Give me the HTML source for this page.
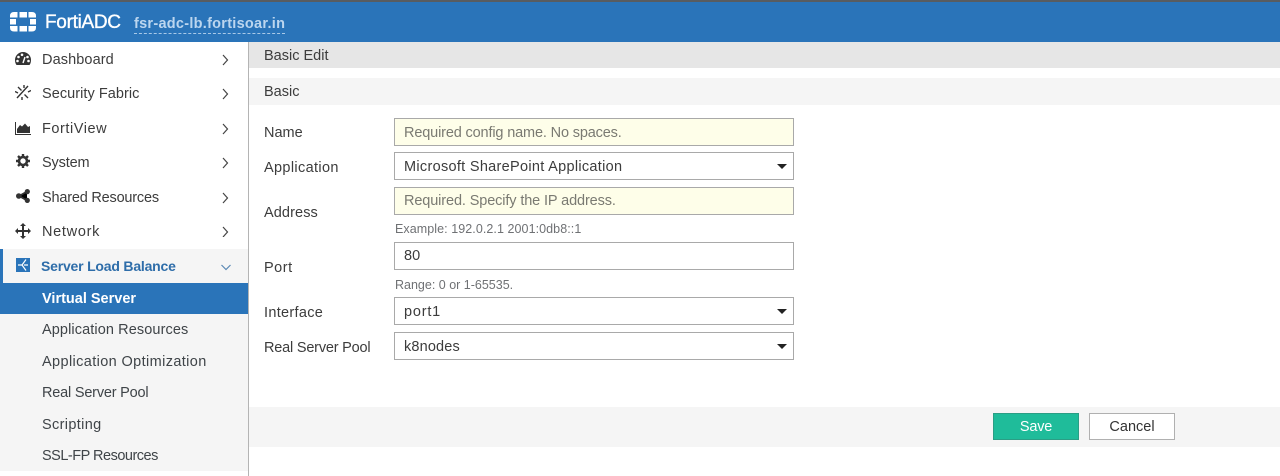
<!DOCTYPE html>
<html><head><meta charset="utf-8"><style>
html,body{margin:0;padding:0;background:#fff}
body{width:1280px;height:476px;position:relative;overflow:hidden;font-family:"Liberation Sans",sans-serif;font-size:14.5px;color:#333}
div{position:absolute;box-sizing:border-box;white-space:nowrap}
svg{position:absolute;display:block}
.n{left:42px;height:20px;line-height:20px;color:#3c3c3c}
.s{left:42px;height:20px;line-height:20px;color:#3f4448}
.l{left:264px;height:20px;line-height:20px;color:#3c3c3c}
.f{left:394px;width:400px;height:28px;border:1px solid #a9a9a9;background:#fff;line-height:28px;padding-left:9px;color:#3c3c3c}
.y{background:#fefee9;color:#7a7a72}
.h{left:395px;font-size:12.5px;height:16px;line-height:16px;color:#6f7174}
.t{left:777px;width:0;height:0;border-left:5px solid transparent;border-right:5px solid transparent;border-top:5px solid #222}
</style></head><body>
<div style="left:0;top:0;width:1280px;height:2px;background:#585c60"></div>
<div style="left:0;top:2px;width:1280px;height:40px;background:#2a74b9"></div>
<svg style="left:10px;top:12px" width="26" height="20" viewBox="0 0 26 20" fill="#fff">
<path d="M0 4Q0 0 4 0H7.500V5.500H0ZM9.500 0H17V5.500H9.500ZM18.500 0H22Q26 0 26 4V5.500H18.500ZM0 7H6V12.500H0ZM20 7H26V12.500H20ZM0 14H7.500V19.500H4Q0 19.500 0 15.500ZM9.500 14H17V19.500H9.500ZM18.500 14H26V15.500Q26 19.500 22 19.500H18.500Z"/></svg>
<div style="left:45px;top:10px;height:26px;line-height:26px;font-size:19px;color:#fff;letter-spacing:-.3px;-webkit-text-stroke:.35px #fff">FortiADC</div>
<div style="left:134px;top:15px;height:19px;line-height:19px;font-size:14.5px;font-weight:bold;color:#bcd6ef;border-bottom:1px dashed #a9c9e8;letter-spacing:.27px">fsr-adc-lb.fortisoar.in</div>

<div style="left:248px;top:42px;width:1px;height:434px;background:#b4b4b4"></div>
<div style="left:0;top:249px;width:248px;height:222px;background:#f5f5f5"></div>
<div style="left:0;top:249px;width:3px;height:34px;background:#2a74b9"></div>
<div style="left:0;top:283px;width:248px;height:31px;background:#2a74b9"></div>

<svg style="left:15px;top:52px" width="16" height="13" viewBox="0 0 16 13"><path fill="#333" d="M8 0A8 8 0 0 0 0 8Q0 11 1.500 13H14.500Q16 11 16 8A8 8 0 0 0 8 0Z"/><circle cx="7" cy="2.800" r="1.300" fill="#fff"/><circle cx="3.500" cy="5" r="1.300" fill="#fff"/><circle cx="12.500" cy="5" r="1.300" fill="#fff"/><circle cx="2.500" cy="9" r="1.300" fill="#fff"/><circle cx="13.500" cy="9" r="1.300" fill="#fff"/><path stroke="#fff" stroke-width="1.400" d="M8 11L10 5"/></svg>
<svg style="left:15px;top:85px" width="16" height="16" viewBox="0 0 16 16" stroke="#333" stroke-width="1.400" fill="none"><path d="M3 2L6.500 5.500M9.500 9.500L13 13M13 1L2 13M0 6.500L3 8M13 7L16 5.500M9 0V3M7 12V15"/></svg>
<svg style="left:15px;top:122px" width="16" height="13" viewBox="0 0 16 13"><path fill="#333" d="M0 0H1V12H16V13H0ZM2 11V7L5 3L7 4.500L10 1.500L13 5L15 4V11Z"/></svg>
<svg style="left:16px;top:154px" width="14" height="14" viewBox="0 0 14 14"><path stroke="#333" stroke-width="2.400" d="M7 0V14M0 7H14M2 2L12 12M12 2L2 12"/><circle cx="7" cy="7" r="4" fill="#fff" stroke="#333" stroke-width="2.600"/></svg>
<svg style="left:16px;top:189px" width="14" height="14" viewBox="0 0 14 14"><path stroke="#333" stroke-width="1.600" d="M11 2.500L3 7L11 11.500"/><circle cx="2.800" cy="7" r="2.800" fill="#333"/><circle cx="11.300" cy="2.600" r="2.600" fill="#333"/><circle cx="11.300" cy="11.400" r="2.600" fill="#333"/></svg>
<svg style="left:15px;top:223px" width="16" height="16" viewBox="0 0 16 16" fill="#333"><path d="M7 3H9V7H13V5L16 8L13 11V9H9V13H11L8 16L5 13H7V9H3V11L0 8L3 5V7H7V3H5L8 0L11 3H9Z"/></svg>
<svg style="left:16px;top:258px" width="14" height="14" viewBox="0 0 14 14"><rect width="14" height="14" fill="#2a74b9"/><path stroke="#fff" stroke-width="1.200" fill="none" d="M2 7H6M6 7L10 1.500M6 7L10 12.500M8 7H12"/></svg>

<div class="n" style="top:50px;letter-spacing:.1px">Dashboard</div>
<div class="n" style="top:84px;letter-spacing:.05px">Security Fabric</div>
<div class="n" style="top:119px;letter-spacing:.55px">FortiView</div>
<div class="n" style="top:153px;letter-spacing:-.15px">System</div>
<div class="n" style="top:188px;letter-spacing:-.2px">Shared Resources</div>
<div class="n" style="top:222px;letter-spacing:.7px">Network</div>
<div class="n" style="left:41px;top:256px;color:#2e6da9;font-weight:bold;font-size:14px;letter-spacing:-.2px">Server Load Balance</div>
<div class="s" style="top:289px;color:#fff;font-weight:bold;font-size:14.5px">Virtual Server</div>
<div class="s" style="top:320px;letter-spacing:.1px">Application Resources</div>
<div class="s" style="top:352px;letter-spacing:.38px">Application Optimization</div>
<div class="s" style="top:383px;letter-spacing:-.2px">Real Server Pool</div>
<div class="s" style="top:415px;letter-spacing:.35px">Scripting</div>
<div class="s" style="top:446px;letter-spacing:-.5px">SSL-FP Resources</div>

<svg style="left:221px;top:53px" width="9" height="184" viewBox="0 0 9 184" fill="none" stroke="#444" stroke-width="1.200"><path d="M2 2L6.500 7L2 12M2 36L6.500 41L2 46M2 71L6.500 76L2 81M2 105L6.500 110L2 115M2 140L6.500 145L2 150M2 174L6.500 179L2 184"/></svg>
<svg style="left:220px;top:264px" width="12" height="8" viewBox="0 0 12 8" fill="none" stroke="#5b89b5" stroke-width="1.200"><path d="M1.500 1L6 5.500L10.500 1"/></svg>

<div style="left:249px;top:42px;width:1031px;height:26px;background:#e6e6e6"></div>
<div class="l" style="top:46px">Basic Edit</div>
<div style="left:249px;top:78px;width:1031px;height:27px;background:#f5f5f5"></div>
<div class="l" style="top:82px">Basic</div>

<div class="l" style="top:123px">Name</div>
<div class="l" style="top:158px;letter-spacing:.35px">Application</div>
<div class="l" style="top:203px;letter-spacing:.1px">Address</div>
<div class="l" style="top:258px;letter-spacing:.5px">Port</div>
<div class="l" style="top:303px;letter-spacing:.3px">Interface</div>
<div class="l" style="top:338px;letter-spacing:-.2px">Real Server Pool</div>

<div class="f y" style="top:118px;letter-spacing:-.15px">Required config name. No spaces.</div>
<div class="f" style="top:152px;letter-spacing:.3px">Microsoft SharePoint Application</div>
<div class="t" style="top:164px"></div>
<div class="f y" style="top:187px;letter-spacing:-.12px;line-height:26px">Required. Specify the IP address.</div>
<div class="h" style="top:221px;letter-spacing:.07px">Example: 192.0.2.1 2001:0db8::1</div>
<div class="f" style="top:242px;line-height:26px">80</div>
<div class="h" style="top:277px">Range: 0 or 1-65535.</div>
<div class="f" style="top:297px;letter-spacing:.8px">port1</div>
<div class="t" style="top:309px"></div>
<div class="f" style="top:332px;letter-spacing:.15px">k8nodes</div>
<div class="t" style="top:344px"></div>

<div style="left:249px;top:407px;width:1031px;height:40px;background:#f5f5f5"></div>
<div style="left:993px;top:413px;width:86px;height:27px;background:#1fbc9a;border:1px solid #2b9e85;color:#fff;text-align:center;line-height:26px;letter-spacing:-.2px">Save</div>
<div style="left:1089px;top:413px;width:86px;height:27px;background:#fff;border:1px solid #b0b0b0;color:#333;text-align:center;line-height:26px">Cancel</div>
</body></html>
